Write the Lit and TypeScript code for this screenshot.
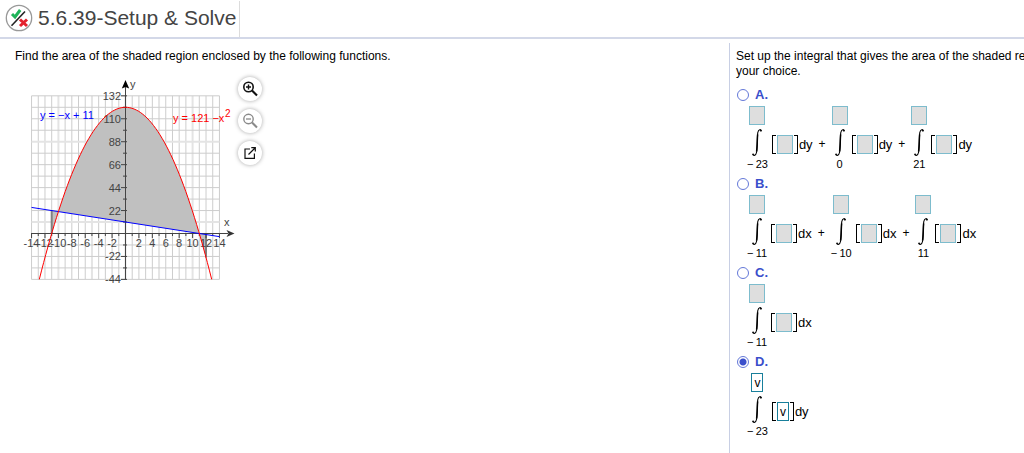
import { LitElement, html, svg, css, nothing } from "lit";
import { customElement, property, state } from "lit/decorators.js";

interface Term {
  lower: string;
  value?: string;
}
interface Choice {
  id: string;
  variable: string;
  terms: Term[];
}

const CHOICES: Choice[] = [
  { id: "A", variable: "dy", terms: [{ lower: "−\u200923" }, { lower: "0" }, { lower: "21" }] },
  { id: "B", variable: "dx", terms: [{ lower: "−\u200911" }, { lower: "−\u200910" }, { lower: "11" }] },
  { id: "C", variable: "dx", terms: [{ lower: "−\u200911" }] },
  { id: "D", variable: "dy", terms: [{ lower: "−\u200923", value: "v" }] },
];

// Plot scale: one x unit and eleven y units per grid cell.
const OX = 110.5;
const OY = 158.5;
const px = (x: number) => +(OX + x * 6.71).toFixed(2);
const py = (y: number) => +(OY - y * 1.043).toFixed(2);
const range = (from: number, to: number, step: number) => {
  const out: number[] = [];
  for (let v = from; v <= to; v += step) out.push(v);
  return out;
};
const curve = (from: number, to: number) => {
  const pts: string[] = [];
  for (let i = 0; i <= 80; i++) {
    const x = from + ((to - from) * i) / 80;
    pts.push(`${px(x)},${py(121 - x * x)}`);
  }
  return pts.join(" ");
};

@customElement("area-graph")
export class AreaGraph extends LitElement {
  static styles = css`
    :host { display: block; }
    svg { display: block; overflow: visible; }
    .grid { stroke: #cdcdcd; stroke-width: 1; fill: none; }
    .grid.soft { stroke: #e4e4e4; stroke-width: 2; }
    .area { fill: #c0c0c0; }
    .edge { stroke: #808080; stroke-width: 2; }
    .axis { stroke: #444; stroke-width: 1; }
    .head { fill: #333; }
    .head.up { fill: #000; }
    .parabola { stroke: #f00; fill: none; }
    .line { stroke: #00f; fill: none; }
    text { font: 11px "Liberation Sans", Arial, sans-serif; fill: #444; }
    .end { text-anchor: end; }
    .mid { text-anchor: middle; }
    .blue { fill: #00f; }
    .red { fill: #f00; }
    .sup { font-size: 10px; }
  `;

  render() {
    const xs = range(-14, 14, 1);
    const ys = range(-44, 132, 11);
    const end = Math.sqrt(165);
    return html`
      <svg width="223" height="212" role="img" aria-label="Graph of y = −x + 11 and y = 121 − x²">
        ${xs.map((x) => svg`<line class="grid ${x % 5 === 0 ? "soft" : ""}" x1=${px(x)} x2=${px(x)} y1=${py(132)} y2=${py(-44)} />`)}
        ${ys.map((y) => svg`<line class="grid ${y % 77 === 11 ? "soft" : ""}" x1=${px(-14)} x2=${px(14)} y1=${py(y)} y2=${py(y)} />`)}
        <polygon class="area" points="${curve(-10, 11)}" />
        <polygon class="area" points="${px(-11)},${py(22)} ${px(-10)},${py(21)} ${px(-11)},${py(0)}" />
        <polygon class="area" points="${px(11)},${py(0)} ${px(12)},${py(-1)} ${px(12)},${py(-23)}" />
        <line class="edge" x1=${px(-11)} x2=${px(-11)} y1=${py(22)} y2=${py(0)} />
        <line class="edge" x1=${px(12)} x2=${px(12)} y1=${py(-1)} y2=${py(-23)} />
        ${range(-44, 132, 22).filter((y) => y !== 0).map((y) => svg`<text class="end" x="106" y=${py(y) + 4}>${y}</text>`)}
        ${range(-14, 14, 2).filter((x) => x !== 0).map((x) => svg`<text class="mid" x=${px(x)} y="172">${x}</text>`)}
        <line class="axis" x1=${px(-14)} x2="213" y1=${OY} y2=${OY} />
        <line class="axis" x1=${OX} x2=${OX} y1="10" y2=${py(-44)} />
        ${ys.map((y) => svg`<line class="axis" x1=${y % 22 === 0 ? 106 : 108} x2="112" y1=${py(y)} y2=${py(y)} />`)}
        ${xs.map((x) => svg`<line class="axis" x1=${px(x)} x2=${px(x)} y1="158" y2=${x % 2 === 0 ? 163 : 161} />`)}
        <path class="head" d="M219.500 158.500l-8-3.500 2 3.500-2 3.500z" />
        <path class="head up" d="M110.500 5l-3.700 8.500 3.700-1.500 3.700 1.500z" />
        <polyline class="line" points="${px(-14)},${py(25)} ${px(14)},${py(-3)}" />
        <polyline class="parabola" points="${curve(-end, end)}" />
        <text x="115" y="13">y</text>
        <text x="209" y="151">x</text>
        <text class="blue" x="25" y="44">y = −x + 11</text>
        <text class="red" x="158" y="47">y = 121 −x</text>
        <text class="red sup" x="210" y="42">2</text>
      </svg>
    `;
  }
}

@customElement("integral-term")
export class IntegralTerm extends LitElement {
  @property() lower = "";
  @property() value = "";
  @property() variable = "";

  static styles = css`
    :host { display: flex; align-items: flex-start; }
    .sign { display: flex; flex-direction: column; align-items: center; min-width: 16px; margin-right: 4px; }
    .sign svg { display: block; margin: 3px 0 1px; }
    .lower { font-size: 11px; line-height: 12px; white-space: nowrap; }
    .body { display: flex; align-items: center; margin-top: 29px; }
    .bracket { box-sizing: border-box; width: 4px; height: 19px; border: 1px solid #000; }
    .open { border-right: 0; margin-right: 1px; }
    .close { border-left: 0; margin-left: 1px; }
    input {
      box-sizing: border-box; width: 16px; height: 19px; margin: 0; padding: 0; border: 1px solid #7dbccd;
      border-radius: 0; background: #dedede; color: #000; text-align: center;
      font: 12px "Liberation Sans", Arial, sans-serif; outline: 0;
    }
    input.filled { width: 12px; border-color: #187f9b; background: #fff; }
    .var { margin-left: 1px; font-size: 13px; line-height: 19px; }
  `;

  private box(label: string) {
    return html`<input class=${this.value ? "filled" : ""} aria-label=${label} .value=${this.value} />`;
  }

  render() {
    return html`
      <div class="sign">
        ${this.box("Upper limit")}
        <svg width="10" height="29" viewBox="0 0 10 29" aria-hidden="true">
          <path d="M9.300 2.800C8.900 1.200 6.600.800 5.800 4.500 5.200 8 5.500 20 4.500 24.500 3.900 27.600 1.600 28 .700 26.500" fill="none" stroke="#000" stroke-width="1.100" />
          <path d="M5.600 6.500C5.200 12 5.300 18 4.600 23.500" fill="none" stroke="#000" stroke-width="1.500" />
          <circle cx="8.900" cy="2.700" r=".9" /><circle cx="1.100" cy="26.300" r=".9" />
        </svg>
        <span class="lower">${this.lower}</span>
      </div>
      <div class="body">
        <span class="bracket open"></span>
        ${this.box("Integrand")}
        <span class="bracket close"></span>
        <span class="var">${this.variable}</span>
      </div>
    `;
  }
}

@customElement("app-root")
export class AppRoot extends LitElement {
  @state() private selected = "D";

  static styles = css`
    :host {
      display: flex; flex-direction: column; min-height: 100vh; background: #fff; color: #000;
      font: 12px/15px "Liberation Sans", Arial, sans-serif; overflow: hidden;
    }
    header { display: flex; height: 36px; padding-top: 1px; border-bottom: 2px solid #d3d8e8; }
    .tab { display: flex; align-items: center; gap: 5px; padding: 0 3px 2px 5px; border-right: 1px solid #dcdcdc; }
    h1 { margin: 0; font-size: 21px; line-height: 24px; font-weight: 400; color: #444; white-space: nowrap; }
    .badge { display: block; }
    main { display: flex; flex: 1; padding-top: 4px; }
    .problem { flex: 1; min-width: 0; padding: 6px 15px 0; }
    .answer { box-sizing: border-box; width: 295px; padding: 6px 0 0 6px; border-left: 1px solid #c8cfe4; overflow: hidden; }
    p { margin: 0; white-space: nowrap; }
    .figure { display: flex; margin-top: 11px; }
    .tools { display: flex; flex-direction: column; gap: 8px; padding-top: 2px; }
    .tools button {
      display: grid; place-items: center; width: 24px; height: 24px; padding: 0; border: 0; border-radius: 50%;
      background: #fff; color: #111; box-shadow: 0 0 4px rgba(0, 0, 0, 0.35);
    }
    .tools button:disabled { color: #8a8a8a; }
    fieldset { margin: 0; padding: 8px 0 0; border: 0; min-width: 0; }
    .choice { height: 89px; }
    .choice label { display: flex; align-items: center; gap: 6px; height: 15px; color: #3a4fcb; font-weight: 700; font-size: 13px; }
    .choice label input {
      appearance: none; box-sizing: border-box; width: 12px; height: 12px; margin: 0 0 0 1px;
      border: 1px solid #6478d8; border-radius: 50%; background: #fff;
    }
    .choice label input:checked { background: radial-gradient(circle, #3a4fcb 0 3px, #fff 4px); }
    .sum { display: flex; margin: 4px 0 0 11px; }
    .plus { margin: 29px 6px 0; font-size: 12px; line-height: 19px; }
  `;

  render() {
    return html`
      <header>
        <div class="tab">
          <svg class="badge" width="28" height="28" viewBox="0 0 28 28" aria-hidden="true">
            <circle cx="14" cy="14" r="12.700" fill="#fff" stroke="#999" stroke-width="1.300" />
            <path d="M7 10l3 3L15.200 6" fill="none" stroke="#1fb45a" stroke-width="3" />
            <path d="M6.500 21.700L20 7.500" stroke="#222" stroke-width="1.600" />
            <path d="M15 15.500l7 6.500M22 15.500L15 22" stroke="#e3212d" stroke-width="3" />
          </svg>
          <h1>5.6.39-Setup &amp; Solve</h1>
        </div>
      </header>
      <main>
        <section class="problem">
          <p>Find the area of the shaded region enclosed by the following functions.</p>
          <div class="figure">
            <area-graph></area-graph>
            <div class="tools">
              <button aria-label="Zoom in">
                <svg width="16" height="16" viewBox="0 0 16 16" fill="none" stroke="currentColor">
                  <circle cx="6.500" cy="6" r="4.700" stroke-width="1.600" />
                  <path d="M10 9.500l5 5" stroke-width="2.200" /><path d="M4 6h5M6.500 3.500v5" stroke-width="1.400" />
                </svg>
              </button>
              <button aria-label="Zoom out" disabled>
                <svg width="16" height="16" viewBox="0 0 16 16" fill="none" stroke="currentColor">
                  <circle cx="6.500" cy="6" r="4.700" stroke-width="1.400" />
                  <path d="M10 9.500l5 5" stroke-width="2" /><path d="M4 6h5" stroke-width="1.300" />
                </svg>
              </button>
              <button aria-label="Open in new window">
                <svg width="14" height="14" viewBox="0 0 14 14" fill="none" stroke="currentColor" stroke-width="1.200">
                  <path d="M7 3H2v9.400h9.400V7.500M5.500 8.500L12 2M8.300 1.600h4v4" />
                </svg>
              </button>
            </div>
          </div>
        </section>
        <section class="answer">
          <p>Set up the integral that gives the area of the shaded region.<br />your choice.</p>
          <fieldset>
            ${CHOICES.map((c) => html`
              <div class="choice">
                <label>
                  <input type="radio" name="choice" .checked=${this.selected === c.id} @change=${() => (this.selected = c.id)} />
                  ${c.id}.
                </label>
                <div class="sum">
                  ${c.terms.map((t, i) => html`
                    ${i ? html`<span class="plus">+</span>` : nothing}
                    <integral-term .lower=${t.lower} .value=${t.value ?? ""} .variable=${c.variable}></integral-term>
                  `)}
                </div>
              </div>
            `)}
          </fieldset>
        </section>
      </main>
    `;
  }
}
